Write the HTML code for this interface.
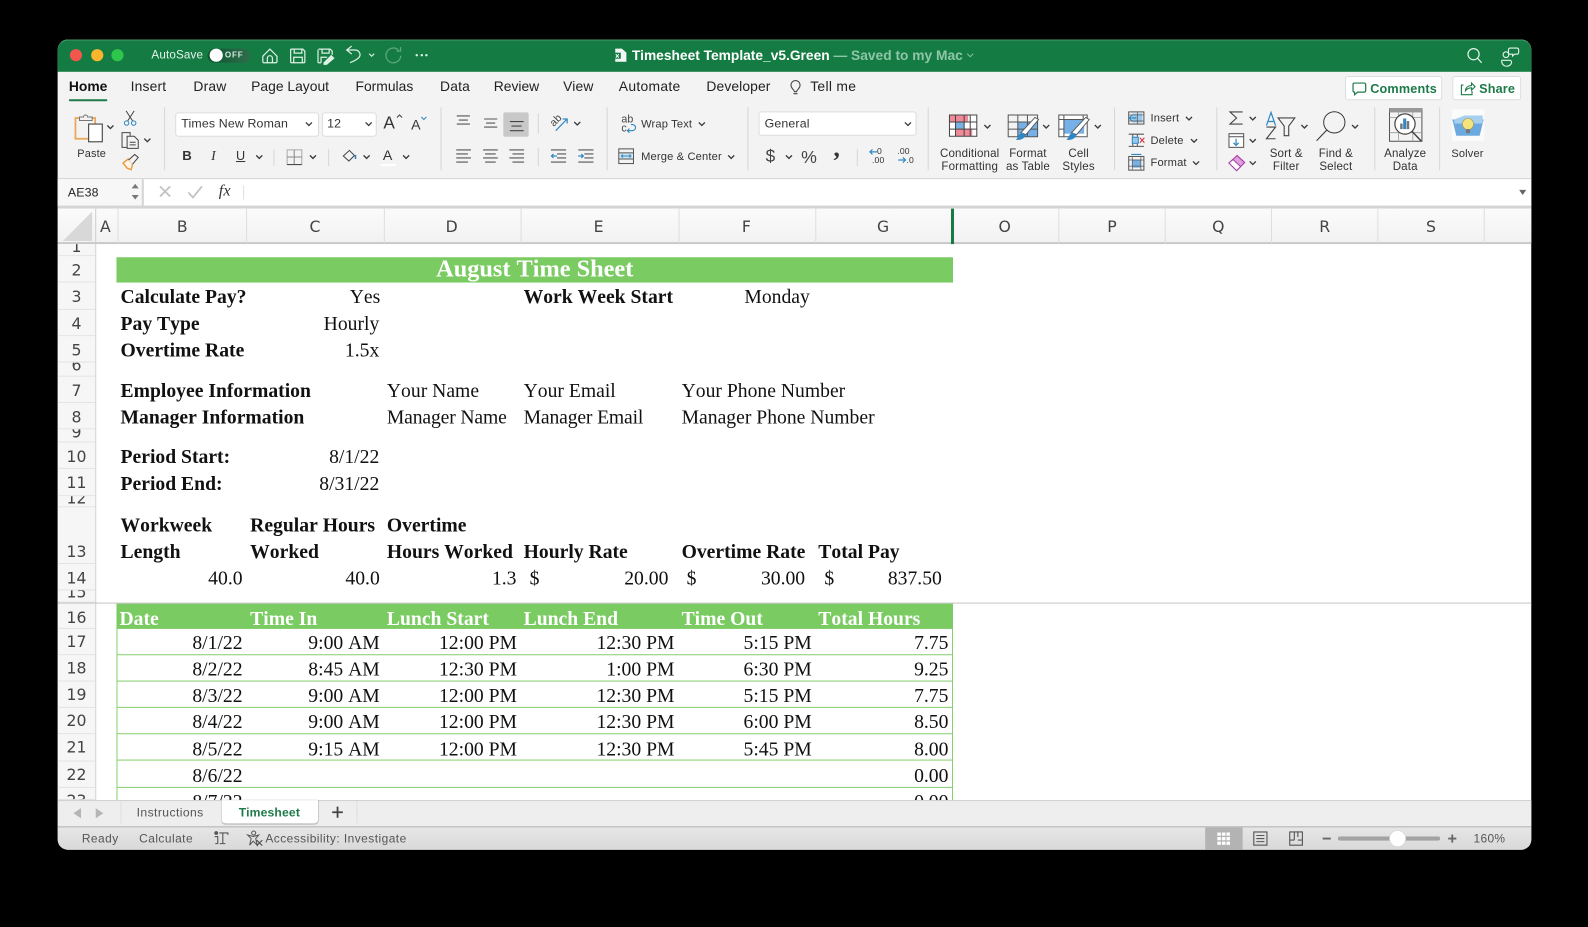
<!DOCTYPE html>
<html><head><meta charset="utf-8"><title>Timesheet</title>
<style>
html,body{margin:0;padding:0;background:#000;width:1588px;height:926px;overflow:hidden}
#s{position:absolute;left:0;top:0;width:1568px;height:915px;transform-origin:0 0;transform:scale(1.012755);font-family:"Liberation Sans",sans-serif;color:#333}
#w{position:absolute;left:57px;top:39px;width:1454.5px;height:800px;border-radius:10px;overflow:hidden;background:#fff}
.b{position:absolute}
.t{position:absolute;white-space:nowrap;line-height:16px;font-size:11.4px;letter-spacing:.15px}
.c{transform:translateX(-50%)}
.r{transform:translateX(-100%)}
.tab{font-size:13.7px;top:77.5px;color:#222}
.k{position:absolute;white-space:nowrap;font-family:"Liberation Serif",serif;font-size:19.4px;line-height:26px;color:#111;margin-top:1.5px;font-kerning:none}
.g{font-weight:bold}
.w{color:#fff;font-weight:bold}
.h{position:absolute;white-space:nowrap;font-family:"DejaVu Sans",sans-serif;font-size:15.5px;line-height:20px;color:#444;transform:translateX(-50%);top:214px}
.n{position:absolute;left:57px;width:37px;overflow:hidden;background:#f6f6f6;border-bottom:1px solid #e2e2e2;box-sizing:border-box}
.n span{position:absolute;left:0;width:37px;text-align:center;font-family:"DejaVu Sans",sans-serif;font-size:15.5px;line-height:20px;color:#444}
.v{position:absolute;width:1px;background:#dedede}
.l{position:absolute;left:115.5px;width:825px;height:1.4px;background:#85cf6d}
.st{font-size:11.8px;color:#555;letter-spacing:.45px;top:820px}
#icons{position:absolute;left:0;top:0}
</style></head><body><div id="s">
<div id="w"></div>
<!-- title bar -->
<div class="b" style="left:57px;top:39px;width:1454.5px;height:32px;background:#147c43;border-radius:10px 10px 0 0;border-top:1px solid #3f9a68;box-sizing:border-box"></div>
<!-- ribbon -->
<div class="b" style="left:57px;top:71px;width:1454.5px;height:106px;background:#f3f3f3;border-bottom:1px solid #cfcfcf;box-sizing:border-box"></div>
<!-- formula bar -->
<div class="b" style="left:57px;top:177px;width:1454.5px;height:27px;background:#fff"></div>
<div class="b" style="left:57px;top:177px;width:85px;height:27px;background:#f7f7f7;border-right:2px solid #d6d6d6;box-sizing:border-box"></div>
<div class="b" style="left:57px;top:203px;width:1454.5px;height:3px;background:#d4d4d4"></div>
<!-- column header -->
<div class="b" style="left:57px;top:206px;width:1454.5px;height:35px;background:linear-gradient(#fbfbfb,#f2f2f2);border-bottom:2px solid #c9c9c9;box-sizing:border-box"></div>
<div class="v" style="left:94px;top:206px;height:584px;background:#cdcdcd"></div>
<div class="v" style="left:116px;top:206px;height:34px"></div>
<div class="v" style="left:243px;top:206px;height:34px"></div>
<div class="v" style="left:379px;top:206px;height:34px"></div>
<div class="v" style="left:514px;top:206px;height:34px"></div>
<div class="v" style="left:670px;top:206px;height:34px"></div>
<div class="v" style="left:805px;top:206px;height:34px"></div>
<div class="v" style="left:939px;top:206px;height:35px;width:3px;background:#1a7a46"></div>
<div class="v" style="left:1045px;top:206px;height:34px"></div>
<div class="v" style="left:1150px;top:206px;height:34px"></div>
<div class="v" style="left:1255px;top:206px;height:34px"></div>
<div class="v" style="left:1360px;top:206px;height:34px"></div>
<div class="v" style="left:1465px;top:206px;height:34px"></div>
<span class="h" style="left:104px">A</span><span class="h" style="left:180px">B</span><span class="h" style="left:311px">C</span><span class="h" style="left:446px">D</span><span class="h" style="left:591px">E</span><span class="h" style="left:737px">F</span><span class="h" style="left:872px">G</span><span class="h" style="left:992px">O</span><span class="h" style="left:1098px">P</span><span class="h" style="left:1203px">Q</span><span class="h" style="left:1308px">R</span><span class="h" style="left:1413px">S</span>
<!-- row numbers -->
<div class="n" style="top:241px;height:12px"><span style="top:-7px">1</span></div>
<div class="n" style="top:253px;height:26px"><span style="top:4px">2</span></div>
<div class="n" style="top:279px;height:27px"><span style="top:4px">3</span></div>
<div class="n" style="top:306px;height:26px"><span style="top:4px">4</span></div>
<div class="n" style="top:332px;height:26px"><span style="top:4px">5</span></div>
<div class="n" style="top:358px;height:14px"><span style="top:-7px">6</span></div>
<div class="n" style="top:372px;height:26px"><span style="top:4px">7</span></div>
<div class="n" style="top:398px;height:26px"><span style="top:4px">8</span></div>
<div class="n" style="top:424px;height:13px"><span style="top:-7px">9</span></div>
<div class="n" style="top:437px;height:26px"><span style="top:4px">10</span></div>
<div class="n" style="top:463px;height:27px"><span style="top:4px">11</span></div>
<div class="n" style="top:490px;height:11px"><span style="top:-8px">12</span></div>
<div class="n" style="top:501px;height:56px"><span style="top:34px">13</span></div>
<div class="n" style="top:557px;height:26px"><span style="top:4px">14</span></div>
<div class="n" style="top:583px;height:12px"><span style="top:-8px">15</span></div>
<div class="n" style="top:596px;height:25px"><span style="top:4px">16</span></div>
<div class="n" style="top:621px;height:26px"><span style="top:3px">17</span></div>
<div class="n" style="top:647px;height:26px"><span style="top:3px">18</span></div>
<div class="n" style="top:673px;height:26px"><span style="top:3px">19</span></div>
<div class="n" style="top:699px;height:26px"><span style="top:3px">20</span></div>
<div class="n" style="top:725px;height:27px"><span style="top:3px">21</span></div>
<div class="n" style="top:752px;height:26px"><span style="top:3px">22</span></div>
<div class="n" style="top:778px;height:12px"><span style="top:3px">23</span></div>
<!-- bands -->
<div class="b" style="left:115px;top:253.5px;width:825.5px;height:25px;background:#7bcb63"></div>
<div class="b" style="left:115px;top:596px;width:825.5px;height:25px;background:#7bcb63"></div>
<div class="b" style="left:57px;top:594.5px;width:1454.5px;height:1.5px;background:#c4c4c4"></div>
<div class="b" style="left:115.3px;top:621px;width:1px;height:170px;background:#85cf6d"></div>
<div class="b" style="left:939.8px;top:621px;width:1px;height:170px;background:#85cf6d"></div>
<div class="l" style="top:645.6px"></div><div class="l" style="top:671.6px"></div><div class="l" style="top:697.6px"></div><div class="l" style="top:723.6px"></div><div class="l" style="top:749.7px"></div><div class="l" style="top:776.6px"></div>
<!-- sheet text -->
<span class="k w c" style="left:528px;top:251.500px;font-size:24px">August Time Sheet</span>
<span class="k g" style="left:119px;top:279px">Calculate Pay?</span><span class="k r" style="left:375.5px;top:279px">Yes</span><span class="k g" style="left:517px;top:279px">Work Week Start</span><span class="k" style="left:735px;top:279px">Monday</span>
<span class="k g" style="left:119px;top:306px">Pay Type</span><span class="k r" style="left:374.5px;top:306px">Hourly</span>
<span class="k g" style="left:119px;top:332px">Overtime Rate</span><span class="k r" style="left:374.5px;top:332px">1.5x</span>
<span class="k g" style="left:119px;top:372px">Employee Information</span><span class="k" style="left:382px;top:372px">Your Name</span><span class="k" style="left:517px;top:372px">Your Email</span><span class="k" style="left:673px;top:372px">Your Phone Number</span>
<span class="k g" style="left:119px;top:398px">Manager Information</span><span class="k" style="left:382px;top:398px;letter-spacing:-.15px">Manager Name</span><span class="k" style="left:517px;top:398px;letter-spacing:-.15px">Manager Email</span><span class="k" style="left:673px;top:398px">Manager Phone Number</span>
<span class="k g" style="left:119px;top:437px">Period Start:</span><span class="k r" style="left:374.5px;top:437px">8/1/22</span>
<span class="k g" style="left:119px;top:464px">Period End:</span><span class="k r" style="left:374.5px;top:464px">8/31/22</span>
<span class="k g" style="left:119px;top:505px">Workweek</span><span class="k g" style="left:247px;top:505px">Regular Hours</span><span class="k g" style="left:382px;top:505px">Overtime</span>
<span class="k g" style="left:119px;top:531px">Length</span><span class="k g" style="left:247px;top:531px">Worked</span><span class="k g" style="left:382px;top:531px">Hours Worked</span><span class="k g" style="left:517px;top:531px">Hourly Rate</span><span class="k g" style="left:673px;top:531px">Overtime Rate</span><span class="k g" style="left:808px;top:531px">Total Pay</span>
<span class="k r" style="left:239.5px;top:557px">40.0</span><span class="k r" style="left:375px;top:557px">40.0</span><span class="k r" style="left:510px;top:557px">1.3</span><span class="k" style="left:523px;top:557px">$</span><span class="k r" style="left:660px;top:557px">20.00</span><span class="k" style="left:678px;top:557px">$</span><span class="k r" style="left:795px;top:557px">30.00</span><span class="k" style="left:814px;top:557px">$</span><span class="k r" style="left:930px;top:557px">837.50</span>
<span class="k w" style="left:118px;top:597px">Date</span><span class="k w" style="left:247px;top:597px">Time In</span><span class="k w" style="left:382px;top:597px">Lunch Start</span><span class="k w" style="left:517px;top:597px">Lunch End</span><span class="k w" style="left:673px;top:597px">Time Out</span><span class="k w" style="left:808px;top:597px">Total Hours</span>
<span class="k r" style="left:239.5px;top:621px">8/1/22</span><span class="k r" style="left:375px;top:621px">9:00 AM</span><span class="k r" style="left:510.5px;top:621px">12:00 PM</span><span class="k r" style="left:666px;top:621px">12:30 PM</span><span class="k r" style="left:801.5px;top:621px">5:15 PM</span><span class="k r" style="left:936.5px;top:621px">7.75</span>
<span class="k r" style="left:239.5px;top:647px">8/2/22</span><span class="k r" style="left:375px;top:647px">8:45 AM</span><span class="k r" style="left:510.5px;top:647px">12:30 PM</span><span class="k r" style="left:666px;top:647px">1:00 PM</span><span class="k r" style="left:801.5px;top:647px">6:30 PM</span><span class="k r" style="left:936.5px;top:647px">9.25</span>
<span class="k r" style="left:239.5px;top:673px">8/3/22</span><span class="k r" style="left:375px;top:673px">9:00 AM</span><span class="k r" style="left:510.5px;top:673px">12:00 PM</span><span class="k r" style="left:666px;top:673px">12:30 PM</span><span class="k r" style="left:801.5px;top:673px">5:15 PM</span><span class="k r" style="left:936.5px;top:673px">7.75</span>
<span class="k r" style="left:239.5px;top:699px">8/4/22</span><span class="k r" style="left:375px;top:699px">9:00 AM</span><span class="k r" style="left:510.5px;top:699px">12:00 PM</span><span class="k r" style="left:666px;top:699px">12:30 PM</span><span class="k r" style="left:801.5px;top:699px">6:00 PM</span><span class="k r" style="left:936.5px;top:699px">8.50</span>
<span class="k r" style="left:239.5px;top:726px">8/5/22</span><span class="k r" style="left:375px;top:726px">9:15 AM</span><span class="k r" style="left:510.5px;top:726px">12:00 PM</span><span class="k r" style="left:666px;top:726px">12:30 PM</span><span class="k r" style="left:801.5px;top:726px">5:45 PM</span><span class="k r" style="left:936.5px;top:726px">8.00</span>
<span class="k r" style="left:239.5px;top:752px">8/6/22</span><span class="k r" style="left:936.5px;top:752px">0.00</span>
<span class="k r" style="left:239.5px;top:778px">8/7/22</span><span class="k r" style="left:936.5px;top:778px">0.00</span>
<!-- sheet tabs -->
<div class="b" style="left:57px;top:790px;width:1454.5px;height:27px;background:#eeeeee;border-top:1px solid #cfcfcf;border-bottom:1.5px solid #a9a9a9;box-sizing:border-box"></div>
<div class="b" style="left:219px;top:790px;width:94.5px;height:24px;background:#fff;border-radius:0 0 4px 4px;border-bottom:1px solid #bbb;box-shadow:0 0 1px #aaa;box-sizing:border-box"></div>
<div class="v" style="left:119px;top:791px;height:22px"></div><div class="v" style="left:352px;top:791px;height:22px"></div>
<span class="t c" style="left:168px;top:794px;font-size:12px;color:#555;letter-spacing:.4px">Instructions</span>
<span class="t c" style="left:266px;top:794px;font-size:12px;font-weight:bold;color:#1d7a49">Timesheet</span>
<!-- status bar -->
<div class="b" style="left:57px;top:817px;width:1454.5px;height:22px;background:linear-gradient(#e6e6e6,#d9d9d9);border-radius:0 0 10px 10px"></div>
<div class="b" style="left:1190px;top:817px;width:37px;height:22px;background:#b3b3b3"></div>
<span class="t c st" style="left:99px">Ready</span>
<span class="t c st" style="left:164px">Calculate</span>
<span class="t st" style="left:262px">Accessibility: Investigate</span>
<span class="t st" style="left:1455px;letter-spacing:.3px">160%</span>
<!-- title text -->
<span class="t" style="left:149.5px;top:47px;font-size:11.5px;color:#e6f3ec">AutoSave</span>
<div class="b" style="left:205px;top:47.5px;width:42px;height:14px;border-radius:7px;background:linear-gradient(90deg,#0e5530,#2f6d4c)"></div>
<div class="b" style="left:206.5px;top:48px;width:13px;height:13px;border-radius:7px;background:#fff"></div>
<span class="t" style="left:222px;top:47px;font-size:8px;color:#d5e8dd;font-weight:bold;letter-spacing:.8px">OFF</span>
<span class="t" style="left:624px;top:47px;font-size:13.6px;font-weight:bold;color:#fff;letter-spacing:0">Timesheet Template_v5.Green <span style="color:#8fc6a7">— Saved to my Mac</span></span>
<!-- tabs -->
<span class="t tab" style="left:68px;font-weight:bold;color:#111;letter-spacing:0">Home</span><span class="t tab" style="left:129px">Insert</span><span class="t tab" style="left:191px">Draw</span><span class="t tab" style="left:248px;letter-spacing:0">Page Layout</span><span class="t tab" style="left:351px;letter-spacing:0">Formulas</span><span class="t tab" style="left:434.5px">Data</span><span class="t tab" style="left:487.5px;letter-spacing:0">Review</span><span class="t tab" style="left:556px">View</span><span class="t tab" style="left:611px;letter-spacing:.3px">Automate</span><span class="t tab" style="left:697.5px;letter-spacing:.1px">Developer</span><span class="t tab" style="left:800px;letter-spacing:.3px">Tell me</span>
<div class="b" style="left:68px;top:97.5px;width:38px;height:2px;border-radius:1px;background:#1d7a49"></div>
<!-- comments/share -->
<div class="b" style="left:1327.5px;top:75px;width:96.5px;height:24px;background:#fff;border:1px solid #ddd;border-radius:3px;box-sizing:border-box"></div>
<div class="b" style="left:1434px;top:75px;width:67.5px;height:24px;background:#fff;border:1px solid #ddd;border-radius:3px;box-sizing:border-box"></div>
<span class="t" style="left:1353px;top:79.5px;font-size:12.5px;font-weight:bold;color:#1d7a49">Comments</span>
<span class="t" style="left:1460.5px;top:79.5px;font-size:12.5px;font-weight:bold;color:#1d7a49">Share</span>
<!-- ribbon boxes -->
<div class="b" style="left:173px;top:110.5px;width:142px;height:24px;background:#fff;border:1px solid #ddd;border-radius:3px;box-sizing:border-box"></div>
<div class="b" style="left:318px;top:110.5px;width:54px;height:24px;background:#fff;border:1px solid #ddd;border-radius:3px;box-sizing:border-box"></div>
<div class="b" style="left:749px;top:110px;width:156px;height:24px;background:#fff;border:1px solid #ddd;border-radius:3px;box-sizing:border-box"></div>
<div class="b" style="left:497px;top:111px;width:25px;height:24px;background:#c8c8c8;border-radius:2px"></div>
<span class="t" style="left:179px;top:114px;font-size:12.2px">Times New Roman</span>
<span class="t" style="left:323px;top:114px;font-size:12.2px">12</span>
<span class="t" style="left:755px;top:114px;font-size:12.2px">General</span>
<span class="t c" style="left:90.5px;top:144px;font-size:10.8px">Paste</span>
<span class="t" style="left:633px;top:114.5px;font-size:11px">Wrap Text</span>
<span class="t" style="left:633px;top:147px;font-size:11px">Merge &amp; Center</span>
<span class="t c" style="left:957.5px;top:144px">Conditional</span><span class="t c" style="left:957.5px;top:156.5px">Formatting</span>
<span class="t c" style="left:1015px;top:144px">Format</span><span class="t c" style="left:1015px;top:156.5px">as Table</span>
<span class="t c" style="left:1065px;top:144px">Cell</span><span class="t c" style="left:1065px;top:156.5px">Styles</span>
<span class="t" style="left:1136px;top:108.5px;font-size:11px">Insert</span>
<span class="t" style="left:1136px;top:131px;font-size:11px">Delete</span>
<span class="t" style="left:1136px;top:153px;font-size:11px">Format</span>
<span class="t c" style="left:1270px;top:144px">Sort &amp;</span><span class="t c" style="left:1270px;top:156.5px">Filter</span>
<span class="t c" style="left:1319px;top:144px">Find &amp;</span><span class="t c" style="left:1319px;top:156.5px">Select</span>
<span class="t c" style="left:1387.5px;top:144px">Analyze</span><span class="t c" style="left:1387.5px;top:156.5px">Data</span>
<span class="t c" style="left:1449px;top:144px;font-size:10.9px">Solver</span>
<span class="t" style="left:180px;top:146px;font-size:13px;font-weight:bold">B</span>
<span class="t" style="left:208.5px;top:146px;font-family:'Liberation Serif',serif;font-size:13.5px;font-style:italic">I</span>
<span class="t" style="left:233px;top:146px;font-size:12.5px;text-decoration:underline">U</span>
<span class="t" style="left:378px;top:145px;font-size:14px">A</span>
<span class="t" style="left:378.5px;top:114px;font-size:17px">A</span><span class="t" style="left:406px;top:114.5px;font-size:14px">A</span>
<span class="t" style="left:756px;top:146.5px;font-size:17px;color:#444">$</span>
<span class="t" style="left:791px;top:147px;font-size:17.5px;color:#444">%</span>
<span class="t" style="left:823px;top:139px;font-family:'Liberation Serif',serif;font-size:25px;font-weight:bold;color:#333">,</span>
<span class="t" style="left:866px;top:145px;font-size:8.5px;line-height:9px">0</span><span class="t" style="left:861px;top:154px;font-size:8.5px;line-height:9px">.00</span>
<span class="t" style="left:886px;top:145px;font-size:8.5px;line-height:9px">.00</span><span class="t" style="left:895px;top:154px;font-size:8.5px;line-height:9px">.0</span>
<span class="t" style="left:67px;top:181.5px;font-size:12.2px;color:#222">AE38</span>
<span class="t" style="left:216px;top:180.5px;font-family:'Liberation Serif',serif;font-style:italic;font-size:16px;color:#333">fx</span>
<span class="t" style="left:613.500px;top:112.500px;font-size:10.500px;line-height:10px;color:#444">ab</span>
<span class="t" style="left:613.500px;top:121.500px;font-size:10.500px;line-height:10px;color:#444">c</span>
<span class="t" style="left:543px;top:113.500px;font-size:10.500px;line-height:10px;color:#444;transform:rotate(-45deg);transform-origin:50% 50%">ab</span>
<svg id="icons" width="1568" height="915" viewBox="0 0 1568 915" fill="none">
<defs><path id="ch" d="M-3-1.6 0 1.4 3-1.6" stroke="#3a3a3a" stroke-width="1.3" fill="none"/></defs>
<!-- traffic lights -->
<circle cx="75" cy="54.5" r="6" fill="#f2564f"/><circle cx="96" cy="54.5" r="6" fill="#f9b62c"/><circle cx="116" cy="54.5" r="6" fill="#2fc64c"/>
<g stroke="#dff0e6" stroke-width="1.2">
<!-- home -->
<path d="M259.5 55.5 266.5 48.5 273.5 55.5V61a1.2 1.2 0 0 1-1.2 1H261a1.2 1.2 0 0 1-1.5-1ZM264 62V57.5a2.5 2.5 0 0 1 5 0V62"/>
<!-- save -->
<path d="M287.5 48.5H299l2 2V61a1 1 0 0 1-1 1H288a1 1 0 0 1-1-1V49ZM290.5 48.5V52.5H298V48.5M290 62V56.5H298.5V62"/>
<!-- save as -->
<path d="M314.5 48.5H326l2 2V54M318 48.5V52.5H325V48.5M317 62H315a1 1 0 0 1-1-1V49M317 62V56.5H323"/>
<path d="M320 62 L327 55 L329.5 57.5 L322.5 63.5 L320 63.5Z" fill="#dff0e6"/>
<!-- undo -->
<path d="M342.300 49.400H350.500C353.500 49.400 355.500 51.500 355.500 54.300C355.500 57 351 60 345.600 61.900M347.300 45.500 342.300 49.400 347.300 53.400"/>
<path d="M364.5 53 367 55.5 369.5 53" stroke-width="1.1"/>
<path d="M393.500 49.500a7.300 7.300 0 1 0 2.200 5.500M395.500 46.500v4h-4" stroke="#5fa77f"/>
</g>
<circle cx="411.5" cy="54.5" r="1.2" fill="#dff0e6"/><circle cx="416.5" cy="54.5" r="1.2" fill="#dff0e6"/><circle cx="421" cy="54.5" r="1.2" fill="#dff0e6"/>
<!-- xlsx doc icon -->
<path d="M607.5 48H614l4.5 4V61h-11Z" fill="#f4f8f5"/><rect x="606.5" y="52" width="6.5" height="6" fill="#147c43"/><path d="M608 53.5 611 57M611 53.5 608 57" stroke="#fff"/>
<path d="M955 53 958 56 961 53" stroke="#8fc6a7" stroke-width="1"/>
<!-- search/people -->
<circle cx="1455" cy="53.5" r="5.5" stroke="#e4f2ea" stroke-width="1.2"/><path d="M1459 57.5 1463 62" stroke="#e4f2ea" stroke-width="1.2"/>
<g stroke="#e4f2ea" stroke-width="1.1"><circle cx="1487" cy="54" r="2.8"/><path d="M1483 59.5h8a2 2 0 0 1 1.5 1.5 4 3.5 0 0 1-9.5.5 2 2 0 0 1 0-2Z"/><path d="M1491 47.5h7a1.5 1.5 0 0 1 1.500 1.500v3a1.500 1.500 0 0 1-1.500 1.500h-2.500l-2 1.800v-1.800h-2.500a1.500 1.500 0 0 1-1.500-1.500v-3a1.500 1.500 0 0 1 1.500-1.500Z"/></g>
<!-- tell me bulb -->
<path d="M784.500 90.500c-.5-2-3.500-3.500-3.500-6.500a4.500 4.500 0 0 1 9 0c0 3-3 4.500-3.500 6.500ZM783.500 92.500h4" stroke="#444" stroke-width="1.1"/>
<!-- comment / share -->
<path d="M1337 82h10a1.500 1.500 0 0 1 1.500 1.500v6a1.500 1.500 0 0 1-1.500 1.500h-6.500l-3 2.500v-2.500a1.500 1.500 0 0 1-1.500-1.500v-6A1.500 1.500 0 0 1 1337 82Z" stroke="#1d7a49" stroke-width="1.2"/>
<path d="M1445 84H1443v9.500h10.500V90M1447 89.500c.3-3.500 3-5 6-5V82l3.500 3.500-3.500 3.500v-2.300c-2.500 0-4.500 1-6 2.800Z" stroke="#1d7a49" stroke-width="1.1"/>
<!-- paste -->
<path d="M74.500 116.500H94V137H74.500Z" stroke="#eaa655" stroke-width="1.7"/>
<path d="M78.500 119V115.500H82.500a2 2 0 0 1 4 0H91V119Z" fill="#f3f3f3" stroke="#777" stroke-width="1"/>
<rect x="87.500" y="122.500" width="13.500" height="17.500" fill="#fff" stroke="#444" stroke-width="1.1"/>
<use href="#ch" x="109" y="125.500"/>
<!-- scissors -->
<path d="M124.500 109.500 131 119.500M132.500 109.500 126 119.500" stroke="#444" stroke-width="1"/><circle cx="125" cy="121.500" r="2.200" stroke="#2f87c5"/><circle cx="132" cy="121.500" r="2.200" stroke="#2f87c5"/>
<!-- copy -->
<path d="M125 145.500H120.500V131H128.500V134" stroke="#444"/><path d="M125.500 134.500H132.500L136.500 138.500V146.500H125.500ZM128 140.500H134M128 143H134" stroke="#444"/>
<use href="#ch" x="145.500" y="138.500"/>
<!-- brush -->
<path d="M121.500 161 126.500 157 131 161.500 129.500 167.500 125.500 166Z" fill="#fdf5e8" stroke="#e89a3f" stroke-width="1.400"/><path d="M127 158 133 152.500 136.500 155.500 131 162" fill="#f3f3f3" stroke="#444" stroke-width="1"/>
<!-- separators -->
<g stroke="#d6d6d6"><path d="M162.500 106V168M435.500 106V168M599.500 106V168M738.500 106V168M916.500 106V168M1100.500 106V168M1201.500 106V168M1357.500 106V168M1421.500 106V168M270.500 147V164M324.500 147V164M531.500 112V132M531.500 146V164M846.500 147V164"/></g>
<use href="#ch" x="305" y="122.500"/><use href="#ch" x="364" y="122.500"/><use href="#ch" x="256" y="155"/><use href="#ch" x="309" y="155"/><use href="#ch" x="362" y="155"/><use href="#ch" x="401" y="155"/><use href="#ch" x="570" y="122"/><use href="#ch" x="693" y="122.500"/><use href="#ch" x="722" y="155"/><use href="#ch" x="896.500" y="122.500"/><use href="#ch" x="779" y="155"/><use href="#ch" x="975" y="125"/><use href="#ch" x="1033" y="125"/><use href="#ch" x="1084" y="125"/><use href="#ch" x="1174" y="117"/><use href="#ch" x="1179" y="139"/><use href="#ch" x="1181" y="161"/><use href="#ch" x="1237" y="117"/><use href="#ch" x="1237" y="139"/><use href="#ch" x="1237" y="161"/><use href="#ch" x="1288" y="125"/><use href="#ch" x="1338" y="125"/>
<path d="M392 116 394.500 113.500 397 116" stroke="#3a3a3a"/><path d="M416 115.500 418.500 118 421 115.500" stroke="#2f87c5"/>
<!-- font color bar, borders, fill -->
<rect x="376" y="162" width="15" height="2" fill="#fff"/>
<rect x="283.500" y="148" width="14.500" height="14.500" stroke="#aaa"/><path d="M290.500 148V162.500M283.500 155H298" stroke="#888"/><path d="M283.500 162.500H298" stroke="#444"/>
<path d="M339 154 345 148.500 350 153.500 344.500 159Z" stroke="#444"/><path d="M351 153v4" stroke="#2f87c5" stroke-width="1.6"/>
<!-- aligns -->
<g stroke="#555" stroke-width="1.1"><path d="M451 114.500H464M453 118.500H462M451 122.500H464M478 117.500H491M480 121.500H489M478 125.500H491"/>
<path d="M503.500 120H517M505 124.500H515M503.500 129H517" stroke="#444"/>
<path d="M450.500 148H465M450.500 152H462M450.500 156H465M450.500 160H462M477 148H491.500M479 152H489.500M477 156H491.500M479 160H489.500M503 148H517.500M506 152H517.500M503 156H517.500M506 160H517.500"/>
<path d="M544 148H559M550 152H559M550 156H559M544 160H559M571 148H586M577 152H586M577 156H586M571 160H586"/></g>
<path d="M550 154H544.500M546.500 152 544.500 154 546.500 156" stroke="#2f87c5" stroke-width="1.2"/><path d="M571 154H576M574 152 576 154 574 156" stroke="#2f87c5" stroke-width="1.2"/>
<!-- orientation arrow -->
<path d="M548.700 129 560 117.500M555.500 117.500H560V122" stroke="#2f87c5" stroke-width="1.2"/>
<!-- wrap arrow -->
<path d="M623 123h1.500a3 3 0 0 1 0 6H619.500M621.500 127 619.500 129 621.500 131" stroke="#2f87c5" stroke-width="1.1"/>
<!-- merge -->
<rect x="611" y="147" width="14.500" height="14.500" stroke="#555"/><rect x="612" y="151" width="12.500" height="6" fill="#cfe5f4"/><path d="M611 151H625.500M611 157H625.500" stroke="#555"/><path d="M613.500 154H623M615 152.500 613.500 154 615 155.500M621.500 152.500 623 154 621.500 155.500" stroke="#2f87c5"/>
<!-- number dec -->
<path d="M866 150H859M861.500 147.500 859 150 861.500 152.500" stroke="#2f87c5" stroke-width="1.200"/><path d="M887 158H894M891.500 155.500 894 158 891.500 160.500" stroke="#2f87c5" stroke-width="1.200"/>
<!-- conditional formatting -->
<rect x="937.500" y="113.500" width="27" height="21" fill="#fff"/><path d="M938 114H956V120H938ZM943 127H960V134.500H943Z" fill="#f08a98"/><rect x="943" y="120.500" width="9" height="6.500" fill="#78b1e3"/>
<path d="M937.500 113.500H964.500V134.500H937.500ZM937.500 120.500H964.500M937.500 127.500H964.500M943.500 113.500V134.500M952 113.500V134.500M958 113.500V134.500" stroke="#444"/>
<!-- format as table -->
<rect x="1005" y="120" width="20" height="15" fill="#76b0e6"/>
<path d="M995.500 113.500H1024.500V135H995.500ZM995.500 120.500H1024.500M995.500 127.500H1024.500M1005 113.500V135M1014.500 113.500V135" stroke="#555"/>
<path d="M1008 131 1022 116 1025.500 118 1013 133Z" fill="#fff" stroke="#555" stroke-width=".9"/><path d="M1003 138c2-1 2.500-6 6-7l4 2.500c-1 3-6 5.500-10 4.500Z" fill="#2f87c5"/>
<!-- cell styles -->
<rect x="1046" y="114" width="27" height="22" fill="#fff"/><rect x="1050.500" y="118" width="20" height="14" fill="#76b0e6"/>
<path d="M1045.500 113.500H1073.500V135H1045.500ZM1045.500 118H1073.500M1050.500 113.500V135M1045.500 127.500H1050.500M1069.500 113.500V118" stroke="#555"/>
<path d="M1058 131 1072 116 1075.500 118 1063 133Z" fill="#fff" stroke="#555" stroke-width=".9"/><path d="M1053 138c2-1 2.500-6 6-7l4 2.500c-1 3-6 5.500-10 4.500Z" fill="#2f87c5"/>
<!-- insert delete format -->
<rect x="1114.500" y="110.500" width="15" height="12" stroke="#555"/><rect x="1118" y="112" width="10" height="9" fill="#9ac7ec"/><path d="M1122 116.500H1115M1118 113.500 1115 116.500 1118 119.500" stroke="#2f87c5" stroke-width="1.200"/><path d="M1123 110.500V122.500M1115 113.500H1129M1115 119.500H1129" stroke="#555" stroke-width=".7"/>
<path d="M1114.500 132.500H1129.500M1114.500 144.500H1129.500M1118.500 132.500V144.500M1123 132.500V135M1123 142V144.500" stroke="#555"/><rect x="1118" y="135.500" width="6" height="6" fill="#9ac7ec" stroke="#2f87c5"/><path d="M1125.500 136 1130 141M1130 136 1125.500 141" stroke="#d9363e" stroke-width="1.100"/>
<rect x="1114.500" y="154.500" width="15" height="13.500" stroke="#555"/><rect x="1118" y="157.500" width="8.500" height="8" fill="#78b1e3"/><path d="M1114.500 158H1129.500M1114.500 164H1129.500M1118 154.500V168M1126.500 154.500V168" stroke="#555" stroke-width=".7"/><path d="M1117 152.500H1127" stroke="#2f87c5" stroke-width="1.100"/>
<!-- sigma fill clear -->
<path d="M1227 110.500H1214.500L1221 116.500 1214.500 122.500H1227" stroke="#444" stroke-width="1.100"/>
<rect x="1213.500" y="132" width="14.500" height="13.500" fill="#fff" stroke="#555"/><path d="M1213.500 135H1228" stroke="#555"/><path d="M1220.500 137V143M1218 141 1220.500 143.500 1223 141" stroke="#2f87c5" stroke-width="1.200"/>
<path d="M1213.500 161 1221.500 153.500 1229 160.500 1221 168.500Z" fill="#e29fe0" stroke="#a63ea6" stroke-width="1.100"/><path d="M1213.500 161 1217.500 157.500 1225 164.500 1221 168.500Z" fill="#fff" stroke="#a63ea6" stroke-width="1"/>
<!-- sort -->
<path d="M1250.500 124 1255 111 1259.500 124M1252 120H1258" stroke="#2f87c5" stroke-width="1.200"/><path d="M1250.500 125.500H1259.500L1250.500 137H1259.500" stroke="#444" stroke-width="1.100"/>
<path d="M1262 116.500H1278.500L1272.500 124.500V134H1268V124.500Z" stroke="#444" stroke-width="1.100"/>
<!-- find -->
<circle cx="1317.500" cy="120.800" r="10.500" stroke="#333"/><path d="M1310 128.500 1300 139" stroke="#333"/>
<!-- analyze -->
<rect x="1372" y="107.500" width="32" height="32" fill="#f3f3f3" stroke="#555"/><rect x="1372" y="107.500" width="32" height="3.500" fill="#999"/><path d="M1372 116H1404M1372 131H1404M1381 111V139.500M1395 111V139.500" stroke="#999" stroke-width=".8"/>
<circle cx="1387.300" cy="122.400" r="10" fill="#fff" stroke="#444" stroke-width="1.200"/><rect x="1382.500" y="122" width="2.500" height="5.500" fill="#777"/><rect x="1385.500" y="117" width="3" height="10.500" fill="#2f87c5"/><rect x="1389" y="119.500" width="2.500" height="8" fill="#777"/><path d="M1394.500 130 1403.500 139.500" stroke="#444" stroke-width="1.500"/>
<!-- solver -->
<rect x="1433.500" y="108" width="32" height="31" fill="#fbfbfb"/><path d="M1434 118H1465L1461 134H1438Z" fill="#6ca9de"/><path d="M1436 118 1446 114H1464V122H1436Z" fill="#a7d0ee"/><circle cx="1449.500" cy="122.500" r="5.500" fill="#f5e37b" stroke="#a79b5a" stroke-width=".6"/><rect x="1447.500" y="127.500" width="4" height="4" fill="#777"/>
<!-- formula bar -->
<path d="M133.500 181.500 130 186H137ZM133.500 197 130 192.500H137Z" fill="#777"/>
<path d="M158 184 168 194M168 184 158 194" stroke="#c3c3c3" stroke-width="1.800"/><path d="M186 190 190.500 195 199.500 184" stroke="#c3c3c3" stroke-width="1.800"/><path d="M240.500 183V197" stroke="#e0e0e0"/>
<path d="M1500 187.500H1507L1503.500 192.500Z" fill="#666"/>
<!-- corner -->
<path d="M91 209V238H62Z" fill="#d8d8d8"/>
<!-- sheet nav -->
<path d="M80 798V808L72.500 803Z" fill="#b5b5b5"/><path d="M94.500 798V808L102 803Z" fill="#b5b5b5"/>
<path d="M328 802H338.500M333.300 796.500V807.500" stroke="#444" stroke-width="1.800"/>
<!-- macro, accessibility -->
<circle cx="213.500" cy="822.500" r="1.900" fill="#555"/><path d="M212 826H215V833H212.500M216.500 822.500H225V824.500M220 822.500V833H217M218 833H222.500" stroke="#555" stroke-width="1.100"/>
<g stroke="#555" stroke-width="1"><circle cx="250.500" cy="822.500" r="2"/><path d="M244.500 824.500 250 826 255.500 824.500 252.500 828 254 834.500 250 830.500 246.500 834.500 248 828Z"/><path d="M253.500 829.500 259 835M259 829.500 253.500 835" stroke="#444"/></g>
<!-- view buttons -->
<g fill="#fff"><rect x="1202" y="822" width="3.500" height="3.200"/><rect x="1206.500" y="822" width="3.500" height="3.200"/><rect x="1211" y="822" width="3.500" height="3.200"/><rect x="1202" y="826.500" width="3.500" height="3.200"/><rect x="1206.500" y="826.500" width="3.500" height="3.200"/><rect x="1211" y="826.500" width="3.500" height="3.200"/><rect x="1202" y="831" width="3.500" height="3.200"/><rect x="1206.500" y="831" width="3.500" height="3.200"/><rect x="1211" y="831" width="3.500" height="3.200"/></g>
<rect x="1238" y="821.500" width="13" height="13" stroke="#555" stroke-width="1.100"/><path d="M1240.500 825H1248.500M1240.500 828H1248.500M1240.500 831H1248.500" stroke="#555"/>
<path d="M1273.500 821.500H1286V834.500H1273.500ZM1273.500 829.500H1278M1278 821.500V829.500M1281.500 821.500V826.500M1281.500 829.500H1286" stroke="#555" stroke-width="1.100"/>
<!-- zoom -->
<path d="M1306 828H1314M1430 828H1438M1434 824V832" stroke="#666" stroke-width="1.800"/>
<rect x="1321" y="826" width="101" height="4" rx="2" fill="#a3a3a3"/><circle cx="1380" cy="828" r="8" fill="#fff" stroke="#d0d0d0" stroke-width=".6"/>
</svg>
</div></body></html>
